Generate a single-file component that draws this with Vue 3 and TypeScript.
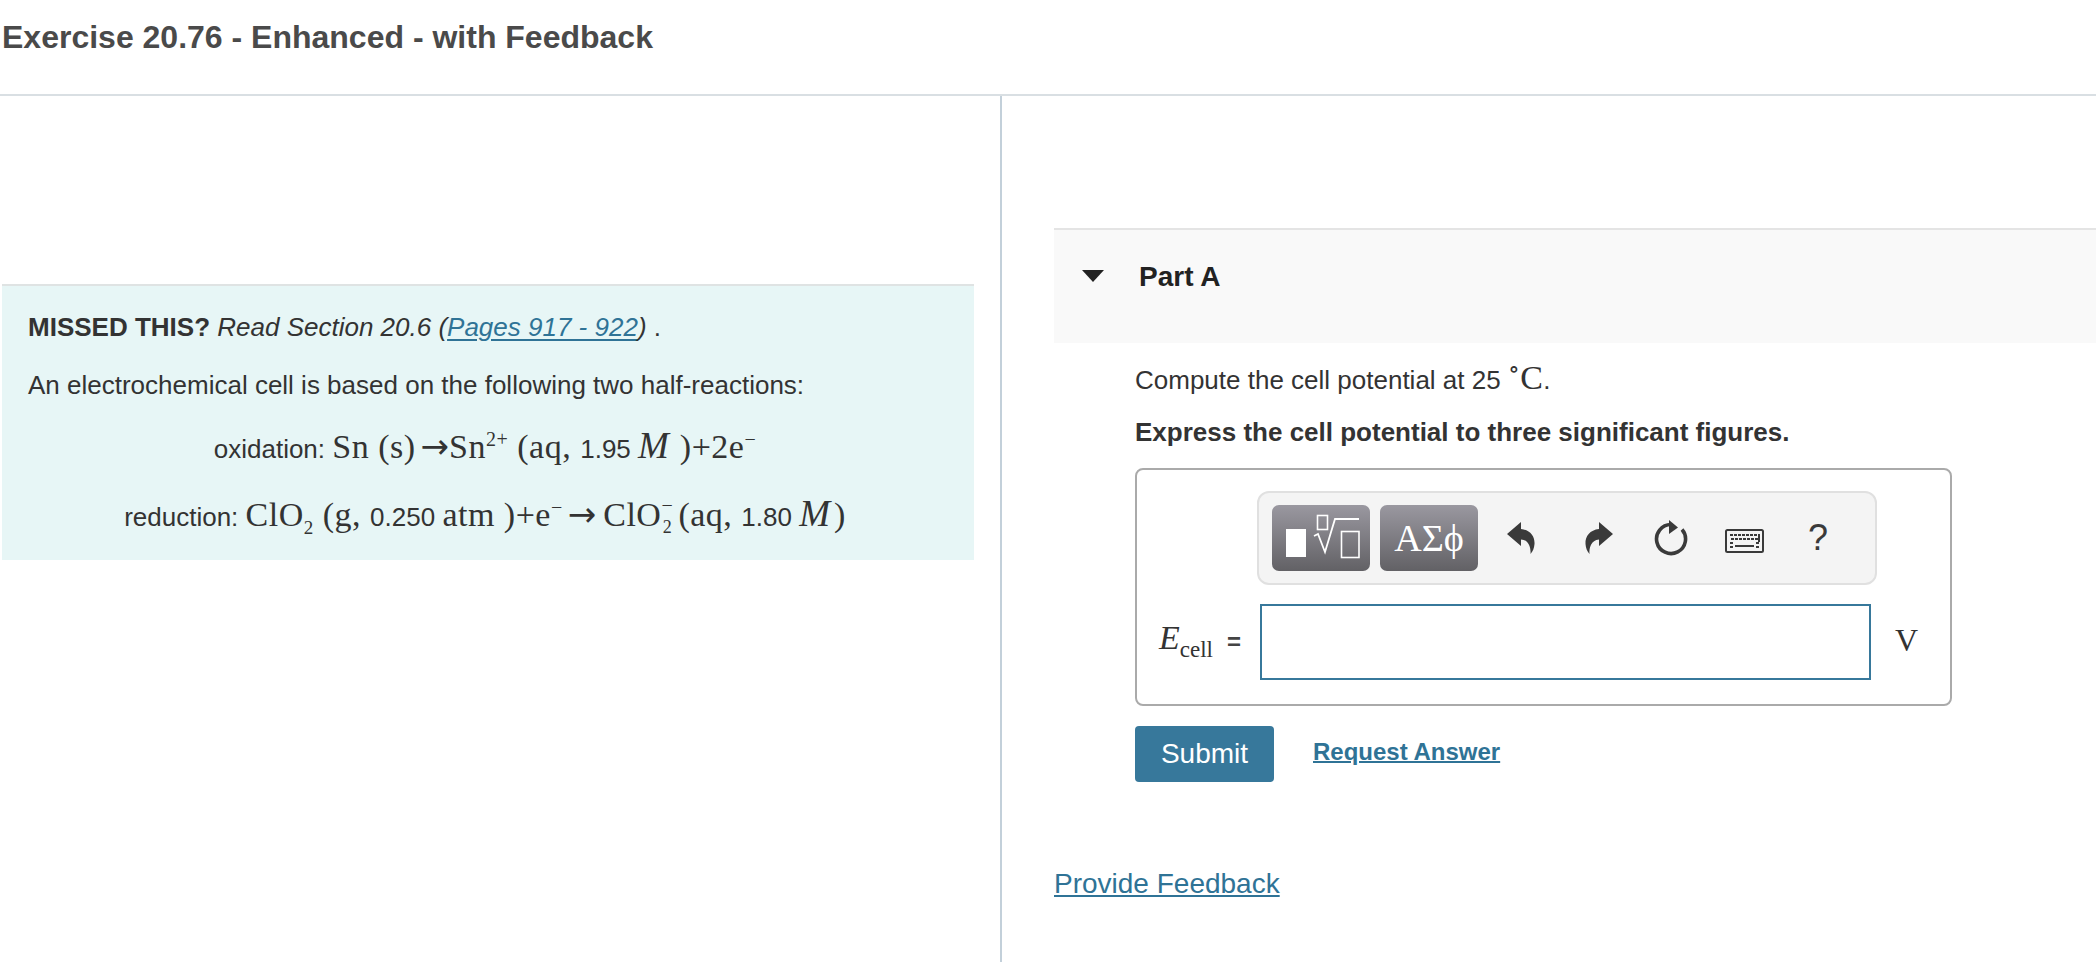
<script setup lang="ts">
const kbTop: number[] = [0, 1, 2, 3, 4, 5, 6];
</script>

<template>
  <div class="page">
    <header class="head"><h1>Exercise 20.76 - Enhanced - with Feedback</h1></header>
    <div class="cols">
      <section class="left">
        <div class="box">
          <p class="missed"><b>MISSED THIS?</b> <i>Read Section 20.6 (<a href="#">Pages 917 - 922</a>)</i> .</p>
          <p class="intro">An electrochemical cell is based on the following two half-reactions:</p>
          <p class="eq eq1">oxidation: <span class="m">Sn (s) <span class="arrow">→</span>Sn<sup>2+</sup> (aq, </span>1.95 <span class="m"><i class="mol">M</i> )+2e<sup>−</sup></span></p>
          <p class="eq eq2">reduction: <span class="m">ClO<sub>2</sub> (g, </span>0.250 <span class="m">atm )+e<sup>−</sup> <span class="arrow wide">→</span>ClO<span class="ss"><sup>−</sup><sub>2</sub></span> (aq, </span>1.80 <span class="m"><i class="mol">M</i> <span class="close">)</span></span></p>
        </div>
      </section>
      <section class="right">
        <div class="part">
          <svg class="tri" width="22" height="12" viewBox="0 0 22 12"><path d="M0 0H22L11 12Z" fill="#222" /></svg>
          <span>Part A</span>
        </div>
        <div class="body">
          <p class="q">Compute the cell potential at 25 <span class="m deg"><sup>∘</sup>C</span>.</p>
          <p class="ex">Express the cell potential to three significant figures.</p>
          <div class="answer">
            <div class="toolrow">
              <div class="tools">
                <div class="tbtn t1">
                  <svg width="98" height="66" viewBox="0 0 98 66" fill="none">
                    <rect x="14" y="24" width="20" height="28" fill="#fff" />
                    <rect x="45.500" y="10.500" width="10" height="14" stroke="#fff" stroke-width="1.600" />
                    <path d="M42 31l4-2 7 18 10-33h24" stroke="#fff" stroke-width="1.800" />
                    <rect x="69.500" y="26.500" width="17.500" height="26" stroke="#fff" stroke-width="1.600" />
                  </svg>
                </div>
                <div class="tbtn t2">ΑΣϕ</div>
                <svg class="ic undo" width="28" height="32" viewBox="0 0 28 32"><path d="M0 12L14 0V7C23 8 28 14 27.500 22C27.200 26 26 29 23.500 32C24 26 22 18 14 17.500V24Z" fill="#3a3a3a" /></svg>
                <svg class="ic redo" width="28" height="32" viewBox="0 0 28 32"><path d="M28 12L14 0V7C5 8 0 14 .5 22C.8 26 2 29 4.500 32C4 26 6 18 14 17.500V24Z" fill="#3a3a3a" /></svg>
                <svg class="ic reload" width="34" height="37" viewBox="0 0 34 37" fill="none"><path d="M17 4.500A14.500 14.500 0 1 0 28 9.500" stroke="#3a3a3a" stroke-width="3.600" /><path d="M15 0L24 7.500L15 14Z" fill="#3a3a3a" /></svg>
                <svg class="ic kb" width="39" height="24" viewBox="0 0 39 24" fill="none">
                  <rect x="1" y="1" width="37" height="22" rx="1.500" stroke="#3a3a3a" stroke-width="2" />
                  <g fill="#3a3a3a">
                    <rect v-for="i in kbTop" :key="'a' + i" :x="5 + i * 4" y="5" width="3" height="2" />
                    <rect v-for="i in kbTop" :key="'b' + i" :x="6 + i * 4" y="9" width="3" height="2" />
                    <rect x="5" y="13" width="3" height="2" />
                    <rect x="31" y="13" width="3" height="2" />
                    <rect x="10" y="16" width="19" height="2" />
                    <rect x="5" y="17" width="3" height="2" />
                    <rect x="31" y="17" width="3" height="2" />
                    <rect x="33" y="5" width="2" height="8" />
                  </g>
                </svg>
                <span class="help">?</span>
              </div>
            </div>
            <div class="inputrow">
              <span class="lab m"><i>E</i><sub>cell</sub></span>
              <span class="eqs">=</span>
              <div class="input"></div>
              <span class="unit m">V</span>
            </div>
          </div>
          <div class="actions">
            <button class="submit" type="button">Submit</button>
            <a class="req" href="#">Request Answer</a>
          </div>
        </div>
        <a class="fb" href="#">Provide Feedback</a>
      </section>
    </div>
  </div>
</template>

<style>
html, body { margin: 0; padding: 0; background: #fff; overflow: hidden; }
</style>

<style scoped>
.page { width: 2096px; height: 962px; overflow: hidden; font-family: "Liberation Sans", Arial, sans-serif; color: #333; background: #fff; }
.head { height: 94px; border-bottom: 2px solid #d9dfe3; display: flex; align-items: center; box-sizing: content-box; }
h1 { margin: 0 0 20px 2px; font-size: 32px; font-weight: 700; color: #4a4a4a; line-height: 40px; }
.cols { display: flex; height: 866px; }
.left { width: 1000px; flex: none; border-right: 2px solid #c3d0da; padding-top: 188px; box-sizing: content-box; }
.box { margin-left: 2px; width: 972px; height: 276px; box-sizing: border-box; border-top: 2px solid #dfe3e3; background: #e7f6f6; padding: 25px 0 0 26px; }
p { margin: 0; }
.missed { font-size: 26px; line-height: 32px; }
a { color: #2f7396; }
.missed a { text-underline-offset: 3px; }
.intro { font-size: 26px; line-height: 32px; margin-top: 26px; }
.eq { text-align: center; font-size: 26px; padding-right: 32px; line-height: 36px; white-space: pre; }
.eq1 { margin-top: 27px; }
.eq2 { margin-top: 29px; }
.m { font-family: "Liberation Serif", "DejaVu Serif", serif; font-size: 34px; letter-spacing: 0.5px; }
.mol { font-size: 37px; letter-spacing: 2px; }
.arrow { font-family: "DejaVu Sans", sans-serif; font-size: 34px; font-weight: 400; letter-spacing: 0; margin-left: -4px; }
.wide { margin-right: 7px; }
.close { margin-left: -7px; }
sup { font-size: 20px; line-height: 0; }
sub { font-size: 19px; line-height: 0; }
.ss { display: inline-flex; flex-direction: column; vertical-align: middle; width: 12px; margin: -12px -4px -8px 0; }
.ss sup, .ss sub { line-height: 22px; vertical-align: baseline; }
.ss sup { font-size: 20px; }
.ss sub { font-size: 18px; }
.right { flex: 1; padding: 132px 0 0 52px; min-width: 0; display: flex; flex-direction: column; align-items: flex-start; }
.part { align-self: stretch; height: 115px; box-sizing: border-box; border-top: 2px solid #e4e4e4; background: #f9f9f9; display: flex; padding: 31px 0 0 28px; font-size: 28px; font-weight: 700; color: #222; line-height: 32px; }
.tri { margin: 9px 35px 0 0; }
.body { padding-left: 81px; width: 817px; box-sizing: content-box; }
.q { font-size: 26px; line-height: 36px; margin-top: 17px; }
.deg { font-size: 34px; }
.deg sup { font-size: 24px; }
.ex { font-size: 26px; font-weight: 700; line-height: 32px; margin-top: 18px; }
.answer { margin-top: 20px; width: 817px; height: 238px; box-sizing: border-box; border: 2px solid #aaa; border-radius: 8px; padding: 21px 0 0 22px; }
.toolrow { padding-left: 98px; }
.tools { width: 620px; height: 94px; box-sizing: border-box; border: 2px solid #e0e0e0; border-radius: 12px; background: #f4f4f4; position: relative; display: flex; align-items: center; padding-left: 13px; }
.tbtn { width: 98px; height: 66px; border-radius: 7px; background: linear-gradient(#9a98a0, #626165); color: #fff; display: flex; align-items: center; justify-content: center; box-sizing: border-box; margin-right: 10px; }
.t2 { font-family: "Liberation Serif", serif; font-size: 38px; }
.ic { flex: none; }
.undo { margin-left: 19px; }
.redo { margin-left: 50px; }
.reload { margin-left: 41px; }
.kb { margin-left: 37px; margin-top: 5px; }
.help { font-size: 36px; margin-left: 44px; color: #3a3a3a; }
.inputrow { display: flex; align-items: center; margin-top: 19px; height: 76px; }
.lab { width: 68px; font-size: 34px; margin-top: -8px; letter-spacing: 0; }
.lab sub { font-size: 23px; }
.eqs { width: 33px; font-size: 24px; font-weight: 700; color: #444; }
.input { width: 611px; height: 76px; box-sizing: border-box; border: 2px solid #37789b; }
.unit { margin-left: 24px; font-size: 32px; margin-top: -4px; }
.actions { display: flex; align-items: center; margin-top: 20px; }
.submit { width: 139px; height: 56px; background: #37789b; color: #fff; border: 0; border-radius: 4px; font: 28px "Liberation Sans", Arial, sans-serif; padding: 0; }
.req { margin-left: 39px; font-size: 24px; font-weight: 700; margin-top: -4px; text-decoration-thickness: 2px; }
.fb { margin-top: 85px; font-size: 28px; line-height: 34px; }
</style>
